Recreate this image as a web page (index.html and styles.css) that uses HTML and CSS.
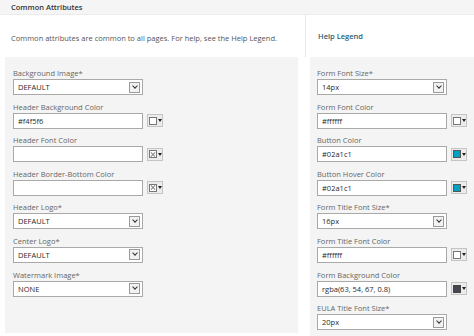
FILE: index.html
```html
<!DOCTYPE html>
<html lang="en">
<head>
    <meta charset="UTF-8">
    <meta name="viewport" content="width=device-width, initial-scale=1.0">
    <title>Common Attributes</title>
    <link rel="stylesheet" href="styles.css">
</head>
<body>
    <div class="header">Common Attributes</div>

    <div class="columns">
        <div class="col left">
            <div class="intro">
                <p>Common attributes are common to all pages. For help, see the Help Legend.</p>
            </div>
            <div class="panel">
                <div class="field">
                    <label>Background Image*</label>
                    <div class="select">DEFAULT<span class="arrow"></span></div>
                </div>
                <div class="field">
                    <label>Header Background Color</label>
                    <div class="row">
                        <div class="input">#f4f5f6</div>
                        <div class="swatch"><span class="chip"></span><span class="tri"></span></div>
                    </div>
                </div>
                <div class="field">
                    <label>Header Font Color</label>
                    <div class="row">
                        <div class="input"></div>
                        <div class="swatch"><span class="chip none"></span><span class="tri"></span></div>
                    </div>
                </div>
                <div class="field">
                    <label>Header Border-Bottom Color</label>
                    <div class="row">
                        <div class="input"></div>
                        <div class="swatch"><span class="chip none"></span><span class="tri"></span></div>
                    </div>
                </div>
                <div class="field">
                    <label>Header Logo*</label>
                    <div class="select">DEFAULT<span class="arrow"></span></div>
                </div>
                <div class="field">
                    <label>Center Logo*</label>
                    <div class="select">DEFAULT<span class="arrow"></span></div>
                </div>
                <div class="field">
                    <label>Watermark Image*</label>
                    <div class="select">NONE<span class="arrow"></span></div>
                </div>
            </div>
        </div>

        <div class="col right">
            <div class="intro">
                <h3>Help Legend</h3>
            </div>
            <div class="panel">
                <div class="field">
                    <label>Form Font Size*</label>
                    <div class="select">14px<span class="arrow"></span></div>
                </div>
                <div class="field">
                    <label>Form Font Color</label>
                    <div class="row">
                        <div class="input">#ffffff</div>
                        <div class="swatch"><span class="chip"></span><span class="tri"></span></div>
                    </div>
                </div>
                <div class="field">
                    <label>Button Color</label>
                    <div class="row">
                        <div class="input">#02a1c1</div>
                        <div class="swatch"><span class="chip teal"></span><span class="tri"></span></div>
                    </div>
                </div>
                <div class="field">
                    <label>Button Hover Color</label>
                    <div class="row">
                        <div class="input">#02a1c1</div>
                        <div class="swatch"><span class="chip teal"></span><span class="tri"></span></div>
                    </div>
                </div>
                <div class="field">
                    <label>Form Title Font Size*</label>
                    <div class="select">16px<span class="arrow"></span></div>
                </div>
                <div class="field">
                    <label>Form Title Font Color</label>
                    <div class="row">
                        <div class="input">#ffffff</div>
                        <div class="swatch"><span class="chip"></span><span class="tri"></span></div>
                    </div>
                </div>
                <div class="field">
                    <label>Form Background Color</label>
                    <div class="row">
                        <div class="input">rgba(63, 54, 67, 0.8)</div>
                        <div class="swatch"><span class="chip dark"></span><span class="tri"></span></div>
                    </div>
                </div>
                <div class="field">
                    <label>EULA Title Font Size*</label>
                    <div class="select">20px<span class="arrow"></span></div>
                </div>
            </div>
        </div>
    </div>
</body>
</html>
```

FILE: styles.css
```css
body {
    margin: 0;
    padding: 0;
    background: #fff;
    font-family: "Open Sans", "Noto Sans", sans-serif;
    font-size: 7.5px;
    color: #555;
    overflow: hidden;
}

.header {
    height: 15px;
    line-height: 15px;
    padding-left: 11px;
    background: #f5f5f5;
    border-bottom: 1px solid #ececec;
    box-sizing: border-box;
    font-weight: 600;
    color: #333;
}

.columns {
    display: flex;
}

.col.left {
    width: 306px;
    flex: none;
}

.col.right {
    flex: 1;
}

.intro {
    height: 42px;
    display: flex;
    align-items: center;
    box-sizing: border-box;
}

.left .intro {
    padding-left: 11px;
    border-right: 1px solid #e8e8e8;
}

.right .intro {
    padding-left: 12px;
}

.intro p {
    margin: 0;
    padding-top: 3px;
}

.intro h3 {
    margin: 0;
    font-size: 7.5px;
    font-weight: 600;
    color: #2b6075;
}

.panel {
    background: #f4f4f4;
    padding: 10px 8px 0;
    box-sizing: border-box;
}

.left .panel {
    margin: 0 8px 0 5px;
    height: 276px;
}

.right .panel {
    margin-left: 4px;
    height: 279px;
    padding-left: 7px;
}

.field {
    margin-bottom: 5.6px;
}

.field label {
    display: block;
    height: 12px;
    line-height: 12px;
    color: #666;
}

.row {
    display: flex;
    align-items: center;
    gap: 4px;
}

.select,
.input {
    width: 130px;
    height: 16px;
    line-height: 14px;
    box-sizing: border-box;
    border: 1px solid #a9a9a9;
    background: #fff;
    padding-left: 4px;
    color: #2a2a2a;
}

.select {
    display: flex;
    align-items: center;
    justify-content: space-between;
    padding-right: 2px;
}

.arrow {
    width: 11px;
    height: 11px;
    box-sizing: border-box;
    border: 1px solid #9a9a9a;
    background: #f2f2f2;
    position: relative;
}

.arrow::after {
    content: "";
    position: absolute;
    left: 2.5px;
    top: 1px;
    width: 3px;
    height: 3px;
    border-right: 1.5px solid #333;
    border-bottom: 1.5px solid #333;
    transform: rotate(45deg);
}

.swatch {
    width: 16px;
    height: 13px;
    box-sizing: border-box;
    border: 1px solid #c4c4c4;
    background: #ececec;
    display: flex;
    align-items: center;
    padding-left: 1px;
    gap: 1px;
}

.chip {
    width: 8px;
    height: 8px;
    box-sizing: border-box;
    border: 1px solid #777;
    background: #fff;
    position: relative;
}

.chip.teal {
    background: #02a1c1;
    border-color: #555;
}

.chip.dark {
    background: #4a4450;
    border-color: #444;
}

/* empty colour: crossed box */
.chip.none::before,
.chip.none::after {
    content: "";
    position: absolute;
    left: 0;
    top: 2.5px;
    width: 6px;
    height: 1px;
    background: #888;
    transform: rotate(45deg);
}

.chip.none::after {
    transform: rotate(-45deg);
}

.tri {
    width: 0;
    height: 0;
    border-left: 2px solid transparent;
    border-right: 2px solid transparent;
    border-top: 3px solid #222;
}
```
